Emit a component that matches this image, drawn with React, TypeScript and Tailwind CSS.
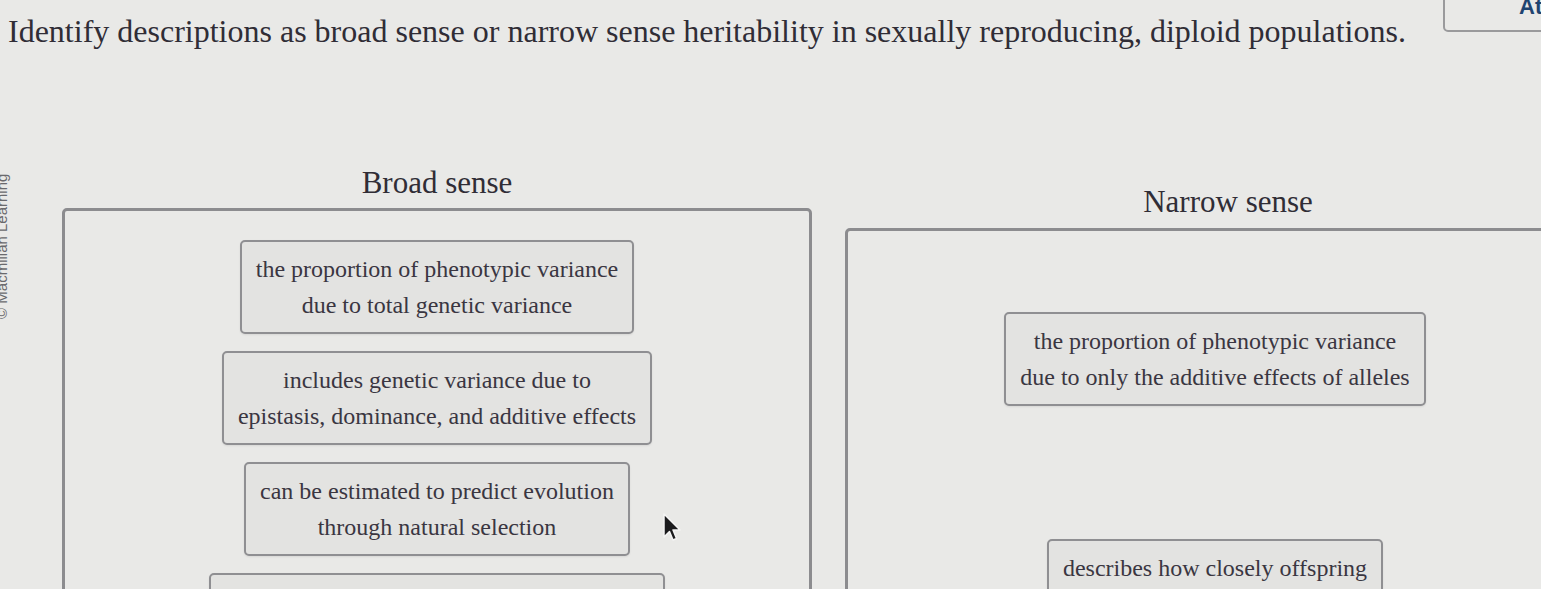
const broad = [
  ["the proportion of phenotypic variance", "due to total genetic variance"],
  ["includes genetic variance due to", "epistasis, dominance, and additive effects"],
  ["can be estimated to predict evolution", "through natural selection"],
  ["is useful for comparing trait variation in", "populations living in different environments"],
];

const narrow = [
  ["the proportion of phenotypic variance", "due to only the additive effects of alleles"],
  ["describes how closely offspring", "resemble their parents"],
];

function Card({ lines }: { lines: string[] }) {
  return (
    <div className="shrink-0 rounded-[5px] border-2 border-[#8f8f92] bg-[#e3e3e1] px-[14px] py-[9px] text-center text-[24px] leading-[36px] text-[#3a3641] shadow-[0_1px_2px_rgba(0,0,0,0.08)]">
      {lines.map((l) => (
        <div key={l} className="whitespace-nowrap">
          {l}
        </div>
      ))}
    </div>
  );
}

export default function App() {
  return (
    <div className="relative h-[589px] w-[1541px] overflow-hidden bg-[#e9e9e7] font-['Liberation_Serif','Times_New_Roman',serif]">
      {/* top-right answer box, cut by the window */}
      <div className="absolute left-[1443px] top-[-12px] h-[44px] w-[220px] rounded-bl-[5px] border-2 border-[#9a9a9c]" />
      <div className="absolute left-[1519px] top-[-10px] font-['Liberation_Sans',Arial,sans-serif] text-[22px] font-bold text-[#1f4470]">
        At
      </div>

      {/* sideways copyright on the left edge */}
      <div className="absolute left-[-70px] top-[235px] -rotate-90 whitespace-nowrap font-['Liberation_Sans',Arial,sans-serif] text-[15px] text-[#6a6a6d]">
        © Macmillan Learning
      </div>

      <h1 className="pl-[8px] pt-[13px] text-[32px] leading-[36px] text-[#302d36]">
        Identify descriptions as broad sense or narrow sense heritability in sexually reproducing, diploid populations.
      </h1>

      <div className="mt-[116px] flex gap-[33px] pl-[62px]">
        {/* Broad sense */}
        <div className="w-[750px] shrink-0">
          <p className="text-center text-[31px] leading-[36px] text-[#302d36]">Broad sense</p>
          <div className="mt-[7px] flex h-[420px] flex-col items-center gap-[17px] rounded-[5px] border-[3px] border-[#8c8c8f] pt-[29px]">
            {broad.map((c) => (
              <Card key={c[0]} lines={c} />
            ))}
          </div>
        </div>

        {/* Narrow sense */}
        <div className="mt-[19px] w-[740px] shrink-0">
          <p className="pl-[26px] text-center text-[31px] leading-[36px] text-[#302d36]">Narrow sense</p>
          <div className="mt-[8px] flex h-[420px] flex-col items-center gap-[133px] rounded-[5px] border-[3px] border-[#8c8c8f] pt-[81px]">
            {narrow.map((c) => (
              <Card key={c[0]} lines={c} />
            ))}
          </div>
        </div>
      </div>

      {/* mouse pointer */}
      <svg className="absolute left-[662px] top-[513px]" width="20" height="30" viewBox="0 0 20 30">
        <path d="M2 1 L2 24 L7.5 18.5 L11 27 L14.5 25.5 L11 17 L18 17 Z" fill="#1b1b1d" stroke="#f4f4f4" strokeWidth="1.5" strokeLinejoin="round" />
      </svg>
    </div>
  );
}
